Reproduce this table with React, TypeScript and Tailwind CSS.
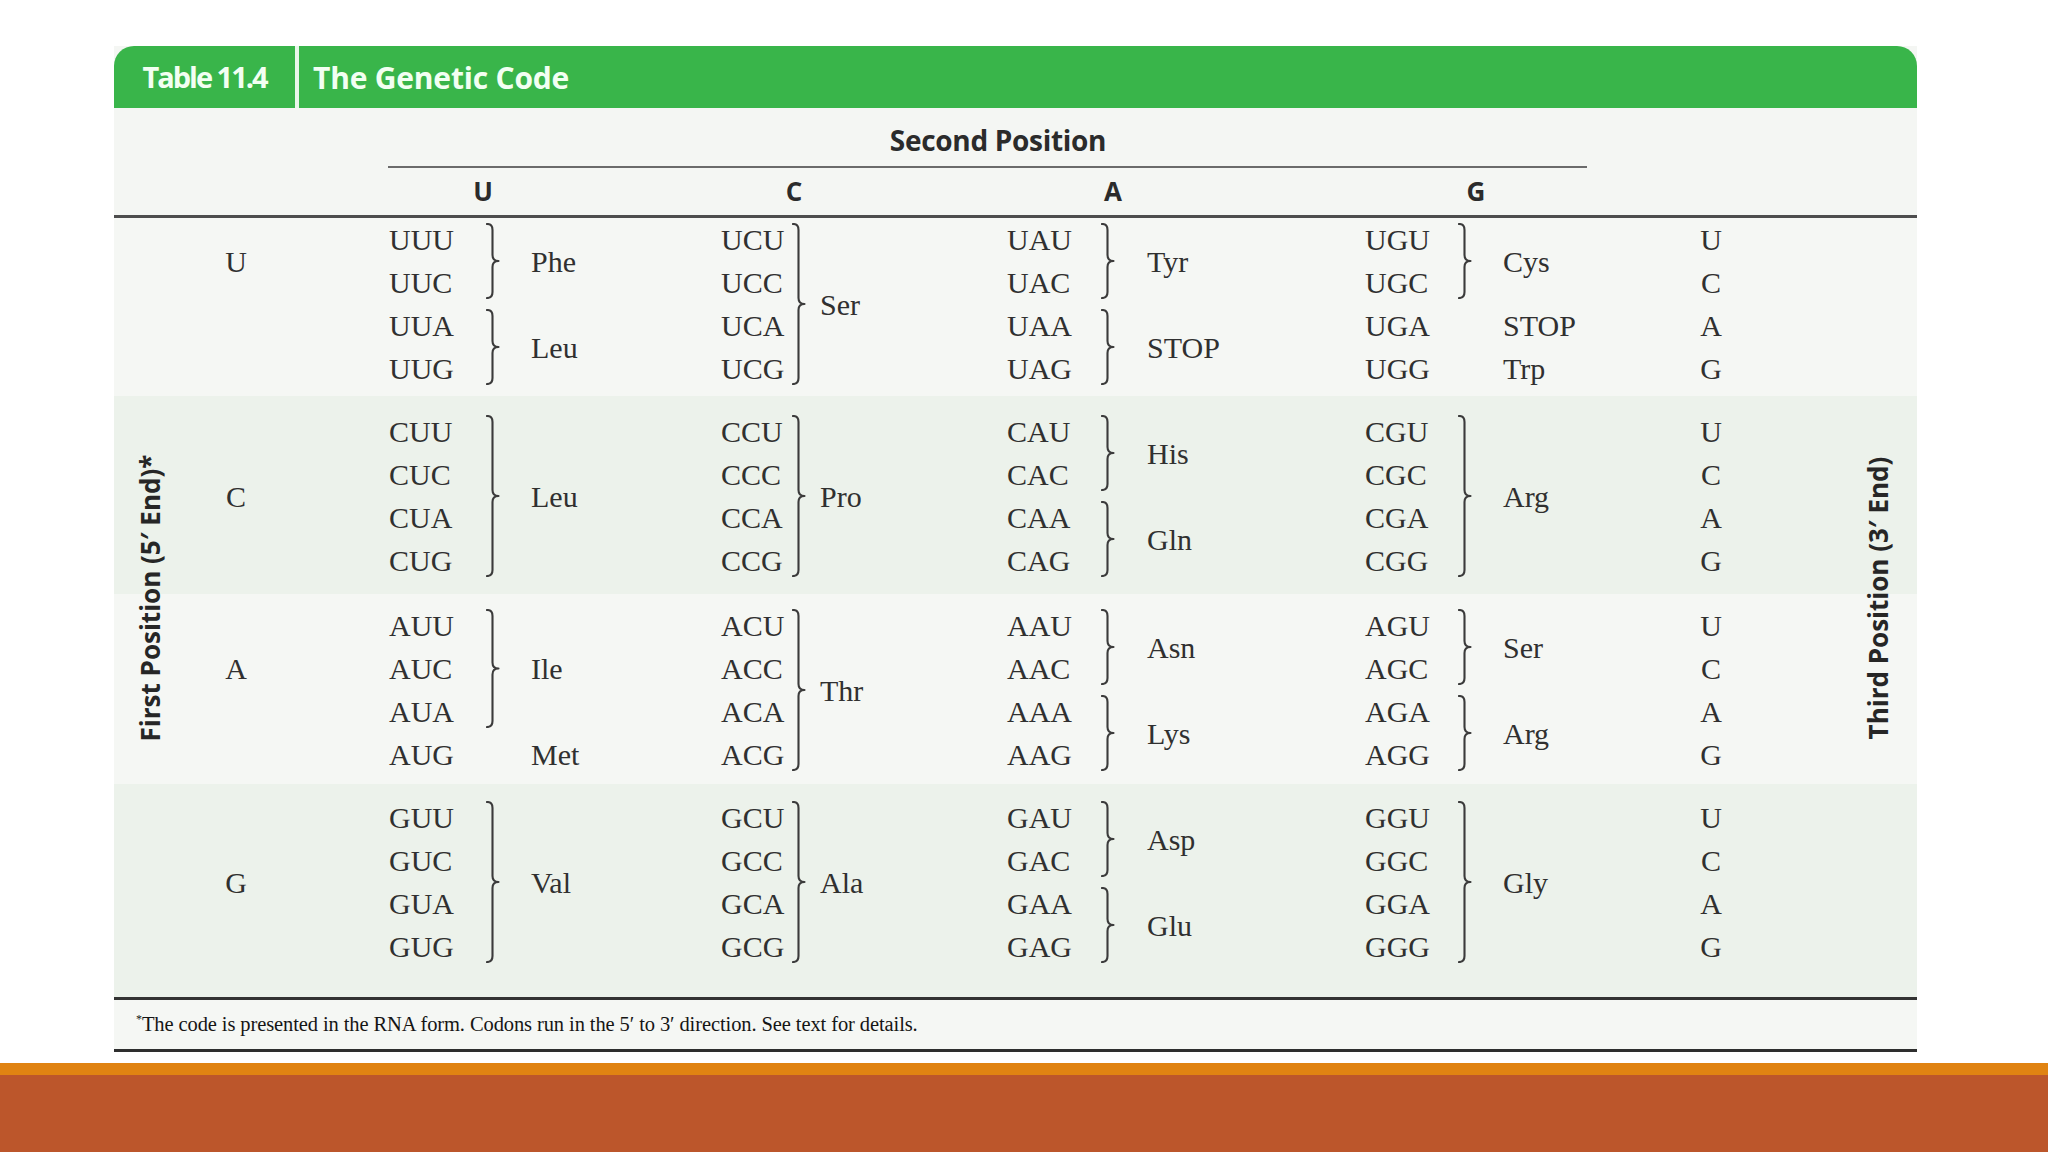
const serif = "font-['Liberation_Serif','Times_New_Roman',serif]";
const sans = "font-['Open_Sans','Liberation_Sans',sans-serif]";

type Group = { pos: string; aa: string; brace: boolean; span: number };
type CellData = { codons: string[]; groups: Group[] };
type RowData = { first: string; letterPos: string; pad: string; bg: string; cells: CellData[] };

const g = (pos: string, span: number, aa: string, brace = true): Group => ({ pos, span, aa, brace });

const rows: RowData[] = [
  {
    first: "U",
    letterPos: "row-start-1 row-span-2",
    pad: "pt-0 pb-[6px]",
    bg: "bg-[#f5f7f4]",
    cells: [
      { codons: ["UUU", "UUC", "UUA", "UUG"], groups: [g("row-start-1 row-span-2", 2, "Phe"), g("row-start-3 row-span-2", 2, "Leu")] },
      { codons: ["UCU", "UCC", "UCA", "UCG"], groups: [g("row-start-1 row-span-4", 4, "Ser")] },
      { codons: ["UAU", "UAC", "UAA", "UAG"], groups: [g("row-start-1 row-span-2", 2, "Tyr"), g("row-start-3 row-span-2", 2, "STOP")] },
      {
        codons: ["UGU", "UGC", "UGA", "UGG"],
        groups: [g("row-start-1 row-span-2", 2, "Cys"), g("row-start-3 row-span-1", 1, "STOP", false), g("row-start-4 row-span-1", 1, "Trp", false)],
      },
    ],
  },
  {
    first: "C",
    letterPos: "row-start-1 row-span-4",
    pad: "pt-[14px] pb-[12px]",
    bg: "bg-[#ecf2eb]",
    cells: [
      { codons: ["CUU", "CUC", "CUA", "CUG"], groups: [g("row-start-1 row-span-4", 4, "Leu")] },
      { codons: ["CCU", "CCC", "CCA", "CCG"], groups: [g("row-start-1 row-span-4", 4, "Pro")] },
      { codons: ["CAU", "CAC", "CAA", "CAG"], groups: [g("row-start-1 row-span-2", 2, "His"), g("row-start-3 row-span-2", 2, "Gln")] },
      { codons: ["CGU", "CGC", "CGA", "CGG"], groups: [g("row-start-1 row-span-4", 4, "Arg")] },
    ],
  },
  {
    first: "A",
    letterPos: "row-start-2 row-span-1",
    pad: "pt-[10px] pb-[8px]",
    bg: "bg-[#f5f7f4]",
    cells: [
      { codons: ["AUU", "AUC", "AUA", "AUG"], groups: [g("row-start-1 row-span-3", 3, "Ile"), g("row-start-4 row-span-1", 1, "Met", false)] },
      { codons: ["ACU", "ACC", "ACA", "ACG"], groups: [g("row-start-1 row-span-4", 4, "Thr")] },
      { codons: ["AAU", "AAC", "AAA", "AAG"], groups: [g("row-start-1 row-span-2", 2, "Asn"), g("row-start-3 row-span-2", 2, "Lys")] },
      { codons: ["AGU", "AGC", "AGA", "AGG"], groups: [g("row-start-1 row-span-2", 2, "Ser"), g("row-start-3 row-span-2", 2, "Arg")] },
    ],
  },
  {
    first: "G",
    letterPos: "row-start-1 row-span-4",
    pad: "pt-[12px] pb-[29px]",
    bg: "bg-[#ecf2eb]",
    cells: [
      { codons: ["GUU", "GUC", "GUA", "GUG"], groups: [g("row-start-1 row-span-4", 4, "Val")] },
      { codons: ["GCU", "GCC", "GCA", "GCG"], groups: [g("row-start-1 row-span-4", 4, "Ala")] },
      { codons: ["GAU", "GAC", "GAA", "GAG"], groups: [g("row-start-1 row-span-2", 2, "Asp"), g("row-start-3 row-span-2", 2, "Glu")] },
      { codons: ["GGU", "GGC", "GGA", "GGG"], groups: [g("row-start-1 row-span-4", 4, "Gly")] },
    ],
  },
];

// column geometry for the four second-position columns
const cols = [
  { w: "w-[332px]", grid: "grid-cols-[97px_14px_1fr]", aa: "pl-[31px]", head: "w-[188px]", letter: "U" },
  { w: "w-[286px]", grid: "grid-cols-[71px_14px_1fr]", aa: "pl-[14px]", head: "w-[146px]", letter: "C" },
  { w: "w-[358px]", grid: "grid-cols-[94px_14px_1fr]", aa: "pl-[32px]", head: "w-[212px]", letter: "A" },
  { w: "w-[316px]", grid: "grid-cols-[93px_14px_1fr]", aa: "pl-[31px]", head: "w-[222px]", letter: "G" },
];

function Brace({ span }: { span: number }) {
  const h = span * 43 - 10;
  const m = h / 2;
  const d = `M1 1 C5 1 6.5 3 6.5 7 L6.5 ${m - 6} C6.5 ${m - 2} 8.5 ${m} 12.5 ${m} C8.5 ${m} 6.5 ${m + 2} 6.5 ${m + 6} L6.5 ${h - 7} C6.5 ${h - 3} 5 ${h - 1} 1 ${h - 1}`;
  return (
    <svg width="14" height={h} viewBox={`0 0 14 ${h}`} fill="none">
      <path d={d} stroke="#3b3b3b" strokeWidth="2.1" strokeLinecap="round" strokeLinejoin="round" />
    </svg>
  );
}

function Cell({ cell, col }: { cell: CellData; col: (typeof cols)[number] }) {
  return (
    <div className={`${col.w} grid ${col.grid} grid-rows-[repeat(4,43px)]`}>
      <div className="col-start-1 row-start-1 row-span-4 flex flex-col">
        {cell.codons.map((c) => (
          <span key={c} className="leading-[43px]">
            {c}
          </span>
        ))}
      </div>
      {cell.groups.map((gr) => (
        <div key={gr.aa + gr.pos} className="contents">
          {gr.brace && (
            <div className={`col-start-2 ${gr.pos} flex items-center justify-center`}>
              <Brace span={gr.span} />
            </div>
          )}
          <div className={`col-start-3 ${gr.pos} flex items-center ${col.aa}`}>{gr.aa}</div>
        </div>
      ))}
    </div>
  );
}

function Row({ row }: { row: RowData }) {
  return (
    <div className={`flex ${row.pad} ${row.bg}`}>
      <div className="grid w-[275px] grid-rows-[repeat(4,43px)]">
        <div className={`${row.letterPos} flex w-[244px] items-center justify-center`}>{row.first}</div>
      </div>
      {row.cells.map((cell, i) => (
        <Cell key={i} cell={cell} col={cols[i]} />
      ))}
      <div className="flex w-[60px] flex-col items-center">
        {["U", "C", "A", "G"].map((l) => (
          <span key={l} className="leading-[43px]">
            {l}
          </span>
        ))}
      </div>
    </div>
  );
}

export default function App() {
  return (
    <div className="flex h-[1152px] w-full flex-col overflow-hidden bg-white">
      <div className="ml-[114px] mt-[46px] w-[1803px] bg-[#f4f6f3]">
        {/* title bar */}
        <div className={`flex h-[62px] items-center rounded-t-[20px] bg-[#39b54a] text-[#f2fff2] ${sans}`}>
          <div className="flex h-full w-[181px] items-center justify-center text-[29px] font-bold tracking-[-2px]">Table 11.4</div>
          <div className="h-full w-[4px] bg-[#e9f7ea]" />
          <div className="pl-[14px] text-[30px] font-bold tracking-[-0.2px]">The Genetic Code</div>
        </div>

        {/* second position heading */}
        <div className={`text-[#2b2b2b] ${sans}`}>
          <div className="h-[58px] pr-[35px] pt-[14px] text-center text-[28px] font-bold leading-[36px] tracking-[-0.3px]">Second Position</div>
          <div className="ml-[274px] h-[2px] w-[1199px] bg-[#6b6b6b]" />
          <div className="flex h-[47px] items-center pl-[275px] text-[26px] font-bold">
            {cols.map((c) => (
              <div key={c.letter} className={c.w}>
                <div className={`${c.head} text-center`}>{c.letter}</div>
              </div>
            ))}
          </div>
        </div>
        <div className="h-[3px] bg-[#4d4d4d]" />

        {/* codon rows */}
        <div className={`relative text-[30px] text-[#303030] ${serif}`}>
          {rows.map((r) => (
            <Row key={r.first} row={r} />
          ))}
          <div
            className={`absolute left-[36px] top-[380px] -translate-x-1/2 -translate-y-1/2 -rotate-90 whitespace-nowrap text-[26px] font-bold leading-none text-[#262626] ${sans}`}
          >
            First Position (5′ End)*
          </div>
          <div
            className={`absolute left-[1764px] top-[380px] -translate-x-1/2 -translate-y-1/2 -rotate-90 whitespace-nowrap text-[26px] font-bold leading-none text-[#262626] ${sans}`}
          >
            Third Position (3′ End)
          </div>
        </div>

        <div className="h-[3px] bg-[#333]" />
        <div className={`flex h-[49px] items-center bg-[#f5f7f4] pl-[22px] text-[20.5px] tracking-[-0.1px] text-[#151515] ${serif}`}>
          <sup className="text-[12px]">*</sup>The code is presented in the RNA form. Codons run in the 5′ to 3′ direction. See text for details.
        </div>
        <div className="h-[3px] bg-[#2e2e2e]" />
      </div>

      <div className="mt-[11px] h-[12px] bg-[#e08312]" />
      <div className="flex-1 bg-[#bc562b]" />
    </div>
  );
}
